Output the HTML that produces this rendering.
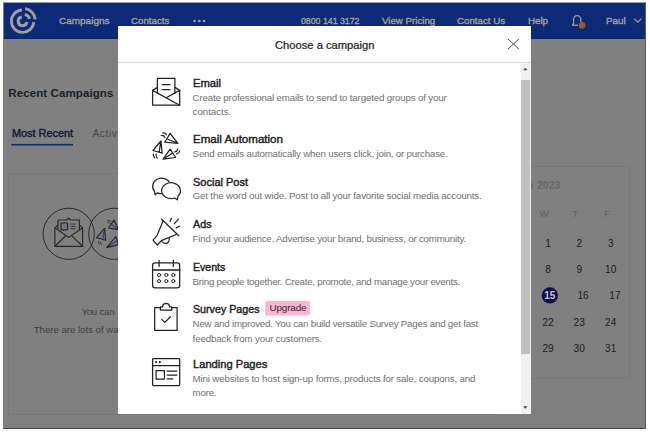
<!DOCTYPE html>
<html lang="en">
<head>
<meta charset="utf-8">
<title>Choose a campaign</title>
<style>
html,body{margin:0;padding:0;}
body{width:650px;height:434px;background:#fff;position:relative;overflow:hidden;font-family:"Liberation Sans",sans-serif;}
.a{position:absolute;}
.t{position:absolute;white-space:pre;line-height:14px;font-family:"Liberation Sans",sans-serif;}
#frame{left:3px;top:2px;width:643px;height:427px;box-sizing:border-box;background:#808080;border:1px solid;border-color:#a39d94 #5a5a5a #4c4c4c #7e7e7e;}
#nav{left:4px;top:3px;width:641px;height:36px;background:#0c2a78;box-shadow:inset 0 -1px 0 #09246f;}
#modal{left:118px;top:26px;width:413px;height:388px;background:#fff;}
#hline{left:118px;top:62px;width:413px;height:1px;background:#dcdcdc;}
#sb{left:521px;top:63px;width:10px;height:351px;background:#f1f1f1;}
#thumb{left:521px;top:80px;width:9px;height:274px;background:#c1c1c1;}
svg{position:absolute;overflow:visible;}
.ic{fill:none;stroke:#232323;stroke-width:1.25;stroke-linecap:round;stroke-linejoin:round;}
</style>
</head>
<body>
<div class="a" id="frame"></div>
<div class="a" id="nav"></div>

<!-- logo -->
<svg width="650" height="434" viewBox="0 0 650 434" style="left:0;top:0">
  <g fill="none" stroke="#a29e9b">
    <!-- outer ring main: from top going counter-clockwise to right -->
    <path d="M22.0 10.0 A11.2 11.2 0 1 0 33.76 22.2" stroke-width="2.9"/>
    <path d="M25.1 8.7 A11.7 11.7 0 0 1 35.2 19.3" stroke-width="2.8"/>
    <path d="M21.8 17.0 A4.4 4.4 0 1 0 26.95 22.1" stroke-width="3"/>
    <path d="M24.8 14.3 A6.5 6.5 0 0 1 29.6 18.9" stroke-width="2.9"/>
  </g>
  <!-- nav dots -->
  <g fill="#a29e9b"><circle cx="194.6" cy="21" r="1.35"/><circle cx="199.3" cy="21" r="1.35"/><circle cx="204" cy="21" r="1.35"/></g>
  <!-- bell -->
  <path d="M572.4 25 L573.6 23.4 V19.2 A3.6 3.6 0 0 1 580.8 19.2 V22" fill="none" stroke="#a29e9b" stroke-width="1.3"/>
  <path d="M572.4 25.2 H578" fill="none" stroke="#a29e9b" stroke-width="1.3"/>
  <circle cx="582" cy="25.3" r="3.35" fill="#9c5a1c"/>
  <!-- chevron -->
  <path d="M634.2 18.6 L637.8 22.2 L641.4 18.6" fill="none" stroke="#a29e9b" stroke-width="1.1"/>

  <!-- tab underline -->
  <rect x="11.4" y="143.9" width="61.6" height="1.6" fill="#0c2a80"/>
  <!-- left card -->
  <rect x="8.5" y="173.5" width="490" height="241" fill="none" stroke="#797979" stroke-width="1"/>
  <!-- calendar card -->
  <rect x="500.5" y="166.5" width="129" height="212" rx="2" fill="#808080" stroke="#797979" stroke-width="1"/>
  <circle cx="549.85" cy="295.4" r="8.15" fill="#0b1150"/>
  <!-- circles -->
  <g fill="none" stroke="#2a2a2a" stroke-width="1">
    <circle cx="68.7" cy="233.8" r="25.6"/>
    <circle cx="114.3" cy="233.8" r="25.6"/>
  </g>
  <!-- envelope in circle -->
  <g fill="none" stroke="#2a2626" stroke-width="1.15" stroke-linejoin="round">
    <path d="M54.9 227.6 V246.3 H82.6 V227.6"/>
    <path d="M58 229.6 V220 H66.8 L68.7 218.2 L70.6 220 H79.4 V229.6"/>
    <path d="M54.9 227.6 L58 225.2 M82.6 227.6 L79.4 225.2"/>
    <path d="M54.9 227.8 L68.7 237.4 L82.6 227.8"/>
    <path d="M55.2 246 L65.8 235.6 M82.3 246 L71.6 235.6"/>
    <rect x="61" y="223" width="6.6" height="6.8" fill="#67788f"/>
    <path d="M70.4 224 H75.4 M70.4 226.4 H75.4 M70.4 228.8 H75.4" stroke-width="0.8"/>
  </g>
  <!-- planes in circle 2 -->
  <g fill="#67788f" stroke="#2a2626" stroke-width="1.1" stroke-linejoin="round">
    <path d="M104.7 228.2 L105.6 240.2 L96.4 237.8 Z"/>
    <path d="M114 220 L118.6 229.6 L108.4 228 Z"/>
    <path d="M115.8 236.5 L118.4 244.6 L106.6 247.6 Z"/>
    <path d="M104.7 228.2 L102.8 239.4 M118.6 229.6 L111.6 224.6 M106.6 247.6 L116.6 241" fill="none" stroke-width="0.8"/>
  </g>
  <g fill="none" stroke="#2a2626" stroke-width="0.8">
    <path d="M107 222 Q109.5 221.5 110.5 224 M107.6 220.2 Q110.6 219.8 112 222.4"/>
    <path d="M98.6 241.2 Q98.2 243.4 99.8 244.6 M100.6 241.8 Q100.4 243.6 101.8 244.6"/>
  </g>
</svg>

<span class="t" style="left:58.50px;top:14.00px;font-size:9.7px;font-weight:400;color:#a29e9b;transform:scaleX(1.0303);transform-origin:0 0;-webkit-text-stroke:0.4px #a29e9b;">Campaigns</span>
<span class="t" style="left:130.70px;top:14.00px;font-size:9.7px;font-weight:400;color:#a29e9b;transform:scaleX(1.0017);transform-origin:0 0;-webkit-text-stroke:0.4px #a29e9b;">Contacts</span>
<span class="t" style="left:301.00px;top:14.00px;font-size:9.7px;font-weight:400;color:#a29e9b;transform:scaleX(0.9048);transform-origin:0 0;-webkit-text-stroke:0.4px #a29e9b;">0800 141 3172</span>
<span class="t" style="left:381.80px;top:14.00px;font-size:9.7px;font-weight:400;color:#a29e9b;transform:scaleX(1.0014);transform-origin:0 0;-webkit-text-stroke:0.4px #a29e9b;">View Pricing</span>
<span class="t" style="left:457.00px;top:14.00px;font-size:9.7px;font-weight:400;color:#a29e9b;transform:scaleX(1.0016);transform-origin:0 0;-webkit-text-stroke:0.4px #a29e9b;">Contact Us</span>
<span class="t" style="left:527.50px;top:14.00px;font-size:9.7px;font-weight:400;color:#a29e9b;transform:scaleX(1.0031);transform-origin:0 0;-webkit-text-stroke:0.4px #a29e9b;">Help</span>
<span class="t" style="left:606.00px;top:14.00px;font-size:9.7px;font-weight:400;color:#a29e9b;transform:scaleX(1.0108);transform-origin:0 0;-webkit-text-stroke:0.4px #a29e9b;">Paul</span>
<span class="t" style="left:8.30px;top:86.00px;font-size:11.6px;font-weight:700;color:#191f27;letter-spacing:0.048px;">Recent Campaigns</span>
<span class="t" style="left:11.60px;top:127.00px;font-size:10.4px;font-weight:400;color:#141b36;transform:scaleX(1.0475);transform-origin:0 0;-webkit-text-stroke:0.4px #141b36;">Most Recent</span>
<span class="t" style="left:92.40px;top:127.00px;font-size:10.4px;font-weight:400;color:#4a4a4a;letter-spacing:0.5px;">Activity</span>
<span class="t" style="left:81.40px;top:305.00px;font-size:9.6px;font-weight:400;color:#3f3f3f;letter-spacing:-0.205px;">You can</span>
<span class="t" style="left:33.70px;top:323.00px;font-size:9.6px;font-weight:400;color:#3f3f3f;">There are lots of ways</span>
<span class="t" style="left:536.90px;top:179.00px;font-size:10.4px;font-weight:700;color:#696969;letter-spacing:0.125px;">2023</span>
<span class="t" style="left:504.00px;top:179.00px;font-size:10.4px;font-weight:700;color:#696969;letter-spacing:-0.302px;">March</span>
<span class="t" style="left:539.38px;top:207.00px;font-size:9.8px;font-weight:400;color:#656565;">W</span>
<span class="t" style="left:572.31px;top:207.00px;font-size:9.8px;font-weight:400;color:#656565;">T</span>
<span class="t" style="left:604.11px;top:207.00px;font-size:9.8px;font-weight:400;color:#656565;">F</span>
<span class="t" style="left:545.19px;top:237.00px;font-size:10.1px;font-weight:400;color:#1c1c1c;">1</span>
<span class="t" style="left:576.39px;top:237.00px;font-size:10.1px;font-weight:400;color:#1c1c1c;">2</span>
<span class="t" style="left:607.89px;top:237.00px;font-size:10.1px;font-weight:400;color:#1c1c1c;">3</span>
<span class="t" style="left:545.19px;top:263.00px;font-size:10.1px;font-weight:400;color:#1c1c1c;">8</span>
<span class="t" style="left:576.39px;top:263.00px;font-size:10.1px;font-weight:400;color:#1c1c1c;">9</span>
<span class="t" style="left:605.08px;top:263.00px;font-size:10.1px;font-weight:400;color:#1c1c1c;">10</span>
<span class="t" style="left:544.18px;top:289.00px;font-size:10.1px;font-weight:700;color:#c4c4c4;">15</span>
<span class="t" style="left:577.38px;top:289.00px;font-size:10.1px;font-weight:400;color:#1c1c1c;">16</span>
<span class="t" style="left:609.28px;top:289.00px;font-size:10.1px;font-weight:400;color:#1c1c1c;">17</span>
<span class="t" style="left:542.38px;top:316.00px;font-size:10.1px;font-weight:400;color:#1c1c1c;">22</span>
<span class="t" style="left:573.58px;top:316.00px;font-size:10.1px;font-weight:400;color:#1c1c1c;">23</span>
<span class="t" style="left:605.08px;top:316.00px;font-size:10.1px;font-weight:400;color:#1c1c1c;">24</span>
<span class="t" style="left:542.38px;top:342.00px;font-size:10.1px;font-weight:400;color:#1c1c1c;">29</span>
<span class="t" style="left:573.58px;top:342.00px;font-size:10.1px;font-weight:400;color:#1c1c1c;">30</span>
<span class="t" style="left:605.08px;top:342.00px;font-size:10.1px;font-weight:400;color:#1c1c1c;">31</span>

<!-- calendar 15 marker is below text: drawn via svg under -->

<div class="a" id="modal"></div>
<div class="a" id="hline"></div>
<div class="a" id="sb"></div>
<div class="a" id="thumb"></div>

<svg width="650" height="434" viewBox="0 0 650 434" style="left:0;top:0">
  <!-- scrollbar arrows -->
  <path d="M523.2 70.2 L525.3 67.7 L527.4 70.2 Z" fill="#404040"/>
  <path d="M523.2 406.2 L525.3 408.7 L527.4 406.2 Z" fill="#404040"/>
  <!-- close X -->
  <path d="M508 39 L518.9 49.1 M518.9 39 L508 49.1" fill="none" stroke="#4a4a4a" stroke-width="1"/>
  <!-- upgrade badge -->
  <rect x="265.2" y="300.9" width="44.7" height="14.6" rx="2" fill="#fbb4d1"/>

  <!-- Email icon -->
  <g class="ic">
    <path d="M152.6 90.4 V105.2 H179.7 V90.4"/>
    <path d="M157.4 93 V78.3 H174.9 V93"/>
    <path d="M152.6 90.4 L157.4 87.4 M179.7 90.4 L174.9 87.4"/>
    <path d="M152.6 90.4 L179.7 105.2 M179.7 90.4 L166.2 97.8"/>
    <path d="M162.2 84.7 H170 M162.2 89.5 H170"/>
  </g>
  <!-- Email automation icon -->
  <g class="ic">
    <path d="M170.1 133.4 L177.9 143.5 L164.8 142.2 Z M177.9 143.5 L168 139.2"/>
    <path d="M160.9 140.9 L162.2 153.1 L153 150.5 Z M160.9 140.9 L159.2 152"/>
    <path d="M170.1 149.2 L175.7 157.5 L163.1 159.2 Z M163.1 159.2 L172.4 153.2"/>
    <path d="M161.3 135.5 Q163.8 135.2 164.9 137.3 M162.8 132.9 Q165.2 132.6 166.4 134.4"/>
    <path d="M174.9 151.8 Q177 151.4 177.7 149.2 M176.6 153.9 Q179 153.4 179.7 150.9"/>
    <path d="M153.4 154 Q153 156.2 154.7 157.8 M156.1 154.2 Q155.8 156.6 157.2 158.2"/>
  </g>
  <!-- Social icon -->
  <g class="ic">
    <path d="M170 183.2 A9 8.2 0 1 0 154.6 191.4 L155.2 194.9 L157.2 192.9 Q159.2 193.9 161.6 193.7"/>
    <path d="M174.6 198 A9.4 7.9 0 1 1 178 196 L177.4 199.8 Z" fill="#fff"/>
  </g>
  <!-- Ads icon -->
  <g class="ic">
    <path d="M161.7 219.2 L178.8 235.8"/>
    <path d="M163.1 220.9 L156.9 235.8 L153 240.2 L157.4 245 L161.3 240.6 L176.2 234.5"/>
    <path d="M161.9 241.6 Q165.7 245 168.4 242 Q169.6 240.4 169.2 238.4"/>
    <path d="M171.4 218.3 L170.1 221.4 M178.4 219.2 L174.4 223.6 M179.7 226.2 L176.2 227.9"/>
  </g>
  <!-- Events icon -->
  <g class="ic">
    <rect x="152.6" y="262.9" width="27.1" height="25" rx="2.6"/>
    <path d="M152.6 269.9 H179.7" stroke-width="1.5"/>
    <path d="M159.1 260.3 V266.4 M173.3 260.3 V266.4"/>
    <g stroke-width="1"><circle cx="159.1" cy="275" r="1.55"/><circle cx="166.3" cy="275" r="1.55"/><circle cx="173.3" cy="275" r="1.55"/>
    <circle cx="159.1" cy="281.1" r="1.55"/><circle cx="166.3" cy="281.1" r="1.55"/><circle cx="173.3" cy="281.1" r="1.55"/></g>
  </g>
  <!-- Survey icon -->
  <g class="ic">
    <path d="M160.4 307.6 H154.7 V330.3 H177.1 V307.6 H171.8"/>
    <path d="M160.4 310.2 V306.8 H162.4 Q163 303.4 166.1 303.3 Q169.2 303.4 169.8 306.8 H171.8 V310.2 Z"/>
    <path d="M161.6 319.4 L164.8 322.4 L170.5 316.7"/>
  </g>
  <!-- Landing icon -->
  <g class="ic">
    <rect x="152.6" y="358.5" width="27.1" height="27.1" rx="0.8"/>
    <path d="M152.6 365.5 H179.7"/>
    <rect x="156.1" y="370.7" width="8.3" height="8.4"/>
    <path d="M167.2 371.2 H176.8 M167.2 375.1 H176.8 M167.2 378.9 H172.7"/>
    <circle cx="156.1" cy="362" r="0.5"/><circle cx="159.8" cy="362" r="0.5"/>
  </g>
</svg>

<span class="t" style="left:275.20px;top:39.00px;font-size:10.2px;font-weight:400;color:#1f1f1f;transform:scaleX(1.0979);transform-origin:0 0;-webkit-text-stroke:0.22px #1f1f1f;">Choose a campaign</span>
<span class="t" style="left:192.90px;top:77.00px;font-size:10.3px;font-weight:400;color:#1f1f1f;transform:scaleX(1.0913);transform-origin:0 0;-webkit-text-stroke:0.4px #1f1f1f;">Email</span>
<span class="t" style="left:192.60px;top:91.00px;font-size:9.75px;font-weight:400;color:#717171;letter-spacing:-0.171px;">Create professional emails to send to targeted groups of your</span>
<span class="t" style="left:192.60px;top:105.00px;font-size:9.75px;font-weight:400;color:#717171;letter-spacing:-0.054px;">contacts.</span>
<span class="t" style="left:192.90px;top:133.00px;font-size:10.3px;font-weight:400;color:#1f1f1f;transform:scaleX(1.1230);transform-origin:0 0;-webkit-text-stroke:0.4px #1f1f1f;">Email Automation</span>
<span class="t" style="left:192.60px;top:147.00px;font-size:9.75px;font-weight:400;color:#717171;letter-spacing:-0.205px;">Send emails automatically when users click, join, or purchase.</span>
<span class="t" style="left:192.90px;top:176.00px;font-size:10.3px;font-weight:400;color:#1f1f1f;transform:scaleX(1.0676);transform-origin:0 0;-webkit-text-stroke:0.4px #1f1f1f;">Social Post</span>
<span class="t" style="left:192.60px;top:189.00px;font-size:9.75px;font-weight:400;color:#717171;letter-spacing:-0.168px;">Get the word out wide. Post to all your favorite social media accounts.</span>
<span class="t" style="left:192.90px;top:218.00px;font-size:10.3px;font-weight:400;color:#1f1f1f;transform:scaleX(1.0423);transform-origin:0 0;-webkit-text-stroke:0.4px #1f1f1f;">Ads</span>
<span class="t" style="left:192.60px;top:232.00px;font-size:9.75px;font-weight:400;color:#717171;letter-spacing:-0.220px;">Find your audience. Advertise your brand, business, or community.</span>
<span class="t" style="left:192.90px;top:261.00px;font-size:10.3px;font-weight:400;color:#1f1f1f;transform:scaleX(1.0259);transform-origin:0 0;-webkit-text-stroke:0.4px #1f1f1f;">Events</span>
<span class="t" style="left:192.60px;top:275.00px;font-size:9.75px;font-weight:400;color:#717171;letter-spacing:-0.263px;">Bring people together. Create, promote, and manage your events.</span>
<span class="t" style="left:192.90px;top:303.00px;font-size:10.3px;font-weight:400;color:#1f1f1f;transform:scaleX(1.0373);transform-origin:0 0;-webkit-text-stroke:0.4px #1f1f1f;">Survey Pages</span>
<span class="t" style="left:269.50px;top:301.00px;font-size:9.8px;font-weight:400;color:#302b2b;letter-spacing:-0.099px;">Upgrade</span>
<span class="t" style="left:192.60px;top:317.00px;font-size:9.75px;font-weight:400;color:#717171;letter-spacing:-0.230px;">New and improved. You can build versatile Survey Pages and get fast</span>
<span class="t" style="left:192.60px;top:332.00px;font-size:9.75px;font-weight:400;color:#717171;letter-spacing:-0.152px;">feedback from your customers.</span>
<span class="t" style="left:192.90px;top:358.00px;font-size:10.3px;font-weight:400;color:#1f1f1f;transform:scaleX(1.0812);transform-origin:0 0;-webkit-text-stroke:0.4px #1f1f1f;">Landing Pages</span>
<span class="t" style="left:192.60px;top:372.00px;font-size:9.75px;font-weight:400;color:#717171;letter-spacing:-0.162px;">Mini websites to host sign-up forms, products for sale, coupons, and</span>
<span class="t" style="left:192.60px;top:386.00px;font-size:9.75px;font-weight:400;color:#717171;letter-spacing:-0.234px;">more.</span>
</body>
</html>
